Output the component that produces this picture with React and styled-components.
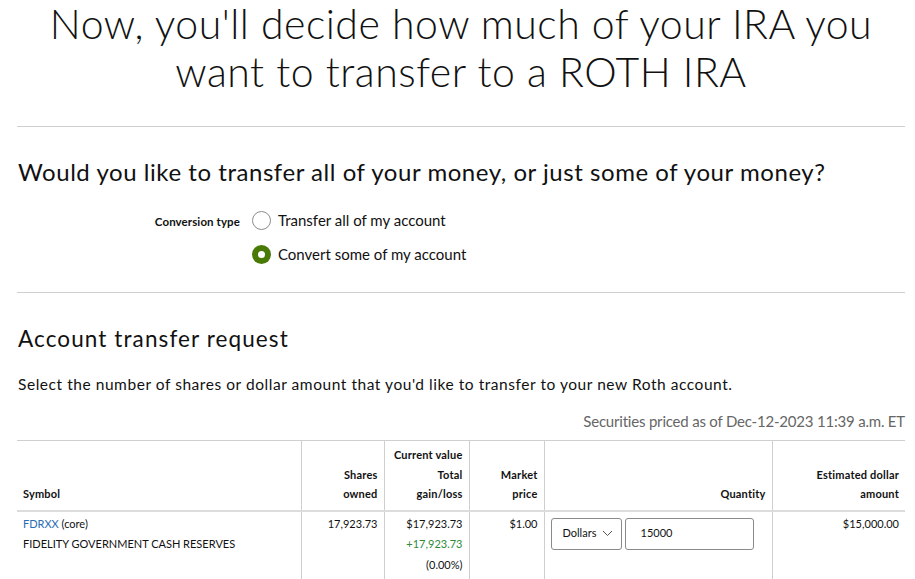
import React from "react";
import styled, { createGlobalStyle } from "styled-components";

const Global = createGlobalStyle`
  html, body { margin: 0; padding: 0; background: #fff; }
  body { font-family: Lato, "Noto Sans", sans-serif; color: #111; }
  * { box-sizing: border-box; }
`;

const Page = styled.div`
  padding: 0 10px 0 17px;
  width: 915px;
`;

const Title = styled.h1`
  margin: 0;
  padding-top: 0;
  font-weight: 300;
  font-size: 41px;
  line-height: 48px;
  text-align: center;
  letter-spacing: 0.5px;
  color: #111;
`;

const Rule = styled.hr`
  margin: ${(p) => p.$mt || 0}px 0 0;
  border: 0;
  border-top: 1px solid #cfcfcf;
`;

const SectionTitle = styled.h2`
  margin: ${(p) => p.$mt}px 0 0 1px;
  font-weight: 400;
  font-size: ${(p) => p.$size}px;
  letter-spacing: ${(p) => p.$ls}px;
  line-height: 30px;
  color: #111;
`;

const FormRow = styled.div`
  display: grid;
  grid-template-columns: 223px auto;
  column-gap: 12px;
  margin-top: 24px;
  align-items: start;
`;

const FieldLabel = styled.div`
  text-align: right;
  font-weight: 700;
  font-size: 11.5px;
  letter-spacing: 0.1px;
  line-height: 18px;
  padding-top: 2px;
`;

const Options = styled.div`
  display: flex;
  flex-direction: column;
  gap: 15px;
`;

const Option = styled.label`
  display: flex;
  align-items: center;
  gap: 7px;
  font-size: 15px;
  line-height: 19px;
  cursor: pointer;
`;

const Radio = styled.span`
  width: 19px;
  height: 19px;
  border-radius: 50%;
  flex: none;
  display: flex;
  align-items: center;
  justify-content: center;
  border: ${(p) => (p.$checked ? "0" : "1.5px solid #8c8c8c")};
  background: ${(p) => (p.$checked ? "#4a7a06" : "#fff")};
  &::after {
    content: "";
    display: ${(p) => (p.$checked ? "block" : "none")};
    width: 7px;
    height: 7px;
    border-radius: 50%;
    background: #fff;
  }
`;

const Lead = styled.p`
  margin: 20px 0 0 1px;
  font-size: 15.5px;
  letter-spacing: 0.55px;
  line-height: 20px;
`;

const Stamp = styled.div`
  margin-top: 17px;
  text-align: right;
  font-size: 15px;
  letter-spacing: -0.2px;
  line-height: 20px;
  color: #666;
`;

const Table = styled.table`
  margin-top: 9px;
  width: 100%;
  border-collapse: collapse;
  table-layout: fixed;
  border-top: 1px solid #cfcfcf;
`;

const Th = styled.th`
  font-size: 11px;
  font-weight: 700;
  letter-spacing: 0.2px;
  line-height: 19.5px;
  vertical-align: bottom;
  text-align: ${(p) => p.$align || "right"};
  padding: 4px 6px 6px;
  border-bottom: 2px solid #dcdcdc;
  border-left: ${(p) => (p.$first ? "0" : "1px solid #cfcfcf")};
`;

const Td = styled.td`
  font-size: 11px;
  line-height: 20.5px;
  vertical-align: top;
  text-align: ${(p) => p.$align || "right"};
  padding: 2px 6px 0;
  height: 70px;
  border-left: ${(p) => (p.$first ? "0" : "1px solid #cfcfcf")};
`;

const Link = styled.a`
  color: #2a6db3;
  text-decoration: none;
`;

const Gain = styled.div`
  color: #2f8a3a;
`;

const Controls = styled.div`
  display: flex;
  gap: 3px;
  padding-top: 4px;
`;

const SelectBox = styled.div`
  width: 71px;
  height: 32px;
  border: 1px solid #8a8a8a;
  border-radius: 3px;
  display: flex;
  align-items: center;
  justify-content: space-between;
  padding: 0 8px 0 11px;
  font-size: 11px;
  color: #111;
`;

const Input = styled.div`
  width: 129px;
  height: 32px;
  border: 1px solid #8a8a8a;
  border-radius: 3px;
  display: flex;
  align-items: center;
  padding-left: 15px;
  font-size: 11px;
  text-align: left;
`;

export default function App() {
  return (
    <Page>
      <Global />
      <Title>
        Now, you'll decide how much of your IRA you
        <br />
        want to transfer to a ROTH IRA
      </Title>
      <Rule $mt={30} />
      <SectionTitle $mt={30} $size={24} $ls={0.55}>
        Would you like to transfer all of your money, or just some of your money?
      </SectionTitle>
      <FormRow>
        <FieldLabel>Conversion type</FieldLabel>
        <Options>
          <Option>
            <Radio />
            Transfer all of my account
          </Option>
          <Option>
            <Radio $checked />
            Convert some of my account
          </Option>
        </Options>
      </FormRow>
      <Rule $mt={28} />
      <SectionTitle $mt={31} $size={22.5} $ls={1.1}>
        Account transfer request
      </SectionTitle>
      <Lead>
        Select the number of shares or dollar amount that you'd like to transfer to your new Roth account.
      </Lead>
      <Stamp>Securities priced as of Dec-12-2023 11:39 a.m. ET</Stamp>
      <Table>
        <colgroup>
          <col style={{ width: 284 }} />
          <col style={{ width: 83 }} />
          <col style={{ width: 85 }} />
          <col style={{ width: 75 }} />
          <col style={{ width: 228 }} />
          <col style={{ width: 133 }} />
        </colgroup>
        <thead>
          <tr>
            <Th $first $align="left">Symbol</Th>
            <Th>Shares<br />owned</Th>
            <Th>Current value<br />Total<br />gain/loss</Th>
            <Th>Market<br />price</Th>
            <Th>Quantity</Th>
            <Th>Estimated dollar<br />amount</Th>
          </tr>
        </thead>
        <tbody>
          <tr>
            <Td $first $align="left">
              <div><Link href="#">FDRXX</Link> (core)</div>
              <div>FIDELITY GOVERNMENT CASH RESERVES</div>
            </Td>
            <Td>17,923.73</Td>
            <Td>
              <div>$17,923.73</div>
              <Gain>+17,923.73</Gain>
              <div>(0.00%)</div>
            </Td>
            <Td>$1.00</Td>
            <Td $align="left">
              <Controls>
                <SelectBox>
                  Dollars
                  <svg width="11" height="7" viewBox="0 0 11 7">
                    <path d="M1 1l4.5 4.5L10 1" fill="none" stroke="#555" strokeWidth="1" />
                  </svg>
                </SelectBox>
                <Input>15000</Input>
              </Controls>
            </Td>
            <Td>$15,000.00</Td>
          </tr>
        </tbody>
      </Table>
    </Page>
  );
}
